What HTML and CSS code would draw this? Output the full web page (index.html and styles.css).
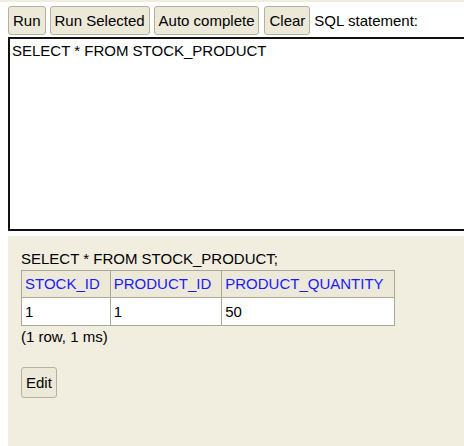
FILE: index.html
```html
<!DOCTYPE html>
<html>
<head>
<meta charset="utf-8">
<link rel="stylesheet" href="styles.css">
</head>
<body>
<div class="topline"></div>
<div class="query">
  <div class="toolbar">
    <button class="btn">Run</button>
    <button class="btn">Run Selected</button>
    <button class="btn">Auto complete</button>
    <button class="btn btn-clear">Clear</button>
    <span class="label">SQL statement:</span>
  </div>
  <div class="editor-wrap">
    <textarea class="editor">SELECT * FROM STOCK_PRODUCT</textarea>
  </div>
</div>
<div class="result">
  <div class="stmt">SELECT * FROM STOCK_PRODUCT;</div>
  <table class="grid">
    <tr><th>STOCK_ID</th><th>PRODUCT_ID</th><th>PRODUCT_QUANTITY</th></tr>
    <tr><td>1</td><td>1</td><td>50</td></tr>
  </table>
  <div class="info">(1 row, 1 ms)</div>
  <button class="btn btn-edit">Edit</button>
</div>
</body>
</html>
```
FILE: styles.css
```css
html, body {
  margin: 0;
  padding: 0;
  height: 100%;
  overflow: hidden;
}
body {
  font-family: "Liberation Sans", Arial, sans-serif;
  font-size: 15px;
  color: #000;
  background: #fff;
}
.topline {
  height: 2px;
  background: #f1eedf;
}
.query {
  padding: 4px 0 0 8px;
}
.toolbar {
  display: flex;
  align-items: center;
  gap: 4px;
  height: 29px;
}
.btn {
  font-family: "Liberation Sans", Arial, sans-serif;
  font-size: 15px;
  line-height: 17px;
  color: #000;
  background: #ece9d8;
  border: 1px solid #b5b19f;
  border-radius: 3px;
  padding: 5px 4px;
  margin: 0;
}
.btn-clear {
  margin-left: 1px;
}
.editor-wrap {
  margin-top: 2px;
  overflow: hidden;
}
.editor {
  display: block;
  box-sizing: border-box;
  width: calc(100% + 20px);
  height: 194px;
  margin: 0;
  border: 2px solid #111;
  padding: 3px 2px;
  font-family: "Liberation Sans", Arial, sans-serif;
  font-size: 15px;
  line-height: 17px;
  resize: none;
  outline: none;
}
.result {
  margin: 5px 0 0 8px;
  height: 210px;
  background: #f1eedf;
  padding: 13px 0 0 13px;
  box-sizing: border-box;
}
.stmt {
  line-height: 19px;
}
.grid {
  border-collapse: collapse;
  margin-top: 2px;
}
.grid th, .grid td {
  border: 1px solid #aca899;
  padding: 4px 3px;
  line-height: 18px;
  text-align: left;
  font-weight: normal;
}
.grid th {
  background: #ece9d8;
  color: #1a1aff;
  padding-right: 10px;
}
.grid td {
  background: #fff;
  height: 18px;
  padding-top: 5px;
}
.info {
  line-height: 19px;
  margin-top: 1px;
}
.btn-edit {
  margin-top: 21px;
  padding: 6px 4px;
}
```
